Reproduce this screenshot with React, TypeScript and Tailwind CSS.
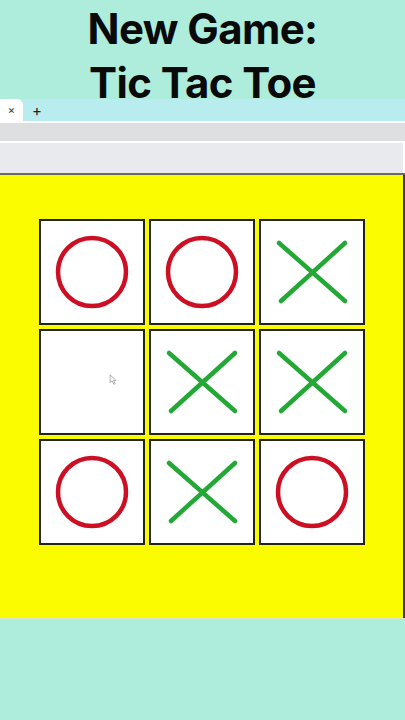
import React from 'react'

type Mark = 'O' | 'X' | null

const board: Mark[] = ['O', 'O', 'X', null, 'X', 'X', 'O', 'X', 'O']

function Circle() {
  return (
    <svg viewBox="0 0 102 102" className="h-full w-full">
      <circle cx="51" cy="51" r="34" fill="none" stroke="#cc0f22" strokeWidth="4.5" />
    </svg>
  )
}

function Cross() {
  return (
    <svg viewBox="0 0 102 102" className="h-full w-full">
      <g stroke="#22a834" strokeWidth="4.5" strokeLinecap="round">
        <line x1="18" y1="22" x2="84" y2="80" />
        <line x1="84" y1="22" x2="20" y2="80" />
      </g>
    </svg>
  )
}

function Cursor() {
  return (
    <svg viewBox="0 0 10 14" className="absolute left-[68px] top-[43px] h-[12px] w-[9px]">
      <path d="M1 1 L1 10 L3.5 8 L5.5 12 L7 11.3 L5 7.5 L8 7.5 Z" fill="#fff" stroke="#8a8a8a" strokeWidth="0.8" strokeLinejoin="round" />
    </svg>
  )
}

export default function App() {
  return (
    <div className="flex h-[720px] w-[405px] flex-col overflow-hidden bg-[#aeeddb] font-['Inter',sans-serif]">
      {/* title */}
      <div className="flex h-[99px] flex-col items-center pt-[2px] text-[42px] font-bold leading-[54px] tracking-[-0.6px] text-[#0a0a0a]">
        <span>New Game:</span>
        <span>Tic Tac Toe</span>
      </div>

      {/* browser chrome */}
      <div className="flex h-[22px] items-end bg-[#b9ecef]">
        <div className="flex h-[22px] w-[23px] items-center justify-center rounded-tr-[6px] bg-white text-[11px] text-[#333]">
          ×
        </div>
        <div className="flex h-[22px] w-[28px] items-center justify-center text-[15px] leading-none text-[#222]">
          +
        </div>
      </div>
      <div className="h-[2px] bg-white" />
      <div className="h-[18px] bg-[#dedfe1]" />
      <div className="h-[2px] bg-white" />
      <div className="h-[30px] border-r-2 border-white bg-[#e8eaed]" />
      <div className="h-[2px] bg-[#6b6b5a]" />

      {/* game area */}
      <div className="h-[443px] border-r-2 border-[#3a3a20] bg-[#fcfc00] pl-[39px] pt-[44px]">
        <div className="grid w-[326px] grid-cols-3 gap-[4px]">
          {board.map((m, i) => (
            <div key={i} className="relative h-[106px] border-2 border-[#24241a] bg-white">
              {m === 'O' && <Circle />}
              {m === 'X' && <Cross />}
              {i === 3 && <Cursor />}
            </div>
          ))}
        </div>
      </div>
      <div className="h-[1px] bg-[#d8e8c8]" />
    </div>
  )
}
